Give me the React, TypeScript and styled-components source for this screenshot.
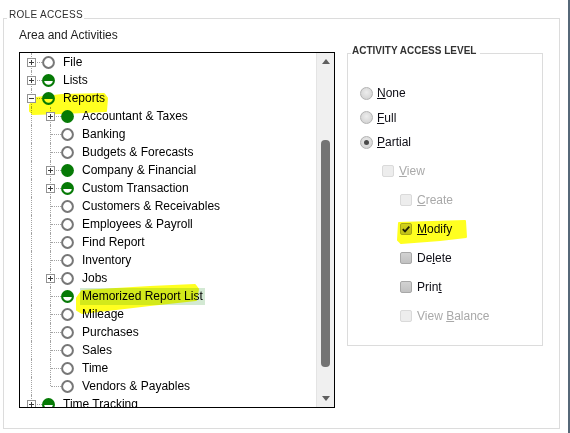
import React from 'react';
import styled, { createGlobalStyle } from 'styled-components';

type Mark = 'none' | 'full' | 'partial';

type TreeNode = {
  label: string;
  level: 0 | 1;
  mark: Mark;
  expander?: 'plus' | 'minus';
  last?: boolean;
  selected?: boolean;
};

const nodes: TreeNode[] = [
  { label: 'File', level: 0, mark: 'none', expander: 'plus' },
  { label: 'Lists', level: 0, mark: 'partial', expander: 'plus' },
  { label: 'Reports', level: 0, mark: 'partial', expander: 'minus' },
  { label: 'Accountant & Taxes', level: 1, mark: 'full', expander: 'plus' },
  { label: 'Banking', level: 1, mark: 'none' },
  { label: 'Budgets & Forecasts', level: 1, mark: 'none' },
  { label: 'Company & Financial', level: 1, mark: 'full', expander: 'plus' },
  { label: 'Custom Transaction', level: 1, mark: 'partial', expander: 'plus' },
  { label: 'Customers & Receivables', level: 1, mark: 'none' },
  { label: 'Employees & Payroll', level: 1, mark: 'none' },
  { label: 'Find Report', level: 1, mark: 'none' },
  { label: 'Inventory', level: 1, mark: 'none' },
  { label: 'Jobs', level: 1, mark: 'none', expander: 'plus' },
  { label: 'Memorized Report List', level: 1, mark: 'partial', selected: true },
  { label: 'Mileage', level: 1, mark: 'none' },
  { label: 'Purchases', level: 1, mark: 'none' },
  { label: 'Sales', level: 1, mark: 'none' },
  { label: 'Time', level: 1, mark: 'none' },
  { label: 'Vendors & Payables', level: 1, mark: 'none', last: true },
  { label: 'Time Tracking', level: 0, mark: 'partial', expander: 'plus' },
];

type Level = { label: string; key: number; checked?: boolean };

const levels: Level[] = [
  { label: 'None', key: 0 },
  { label: 'Full', key: 0 },
  { label: 'Partial', key: 0, checked: true },
];

type Activity = {
  label: string;
  key: number;
  indent: number;
  disabled?: boolean;
  checked?: boolean;
};

const activities: Activity[] = [
  { label: 'View', key: 0, indent: 22, disabled: true },
  { label: 'Create', key: 0, indent: 40, disabled: true },
  { label: 'Modify', key: 0, indent: 40, checked: true },
  { label: 'Delete', key: 2, indent: 40 },
  { label: 'Print', key: 4, indent: 40 },
  { label: 'View Balance', key: 5, indent: 40, disabled: true },
];

const GREEN = '#067a06';

const StateIcon = ({ mark }: { mark: Mark }) => (
  <IconSvg viewBox='0 0 13 13'>
    {mark === 'full' && <circle cx='6.5' cy='6.5' r='6.4' fill={GREEN} />}
    {mark === 'none' && (
      <circle cx='6.5' cy='6.5' r='5.4' fill='#fff' stroke='#777' strokeWidth='2' />
    )}
    {mark === 'partial' && (
      <>
        <circle cx='6.5' cy='6.5' r='5.4' fill='#fff' stroke={GREEN} strokeWidth='2.1' />
        <path d='M1 7 A5.5 5.5 0 0 1 12 7 Z' fill={GREEN} />
      </>
    )}
  </IconSvg>
);

const Expander = ({ open }: { open: boolean }) => (
  <ExpanderSvg viewBox='0 0 9 9'>
    <rect x='0.5' y='0.5' width='8' height='8' fill='#fff' stroke='#939393' />
    <path d='M2 4.5 H7' stroke='#3a3a3a' />
    {!open && <path d='M4.5 2 V7' stroke='#3a3a3a' />}
  </ExpanderSvg>
);

const withKey = (text: string, at: number) => (
  <>
    {text.slice(0, at)}
    <AccessKey>{text[at]}</AccessKey>
    {text.slice(at + 1)}
  </>
);

const App = () => {
  return (
    <Page>
      <GlobalStyle />
      <RoleSet>
        <RoleLegend>ROLE ACCESS</RoleLegend>
        <Body>
          <AreaColumn>
            <AreaLabel>Area and Activities</AreaLabel>
            <TreeBox>
              <TreeList>
                {nodes.map((node) => (
                  <Row key={node.label}>
                    {node.level === 1 && <Guide $line='full' />}
                    <Connector $line={node.last ? 'top' : 'full'}>
                      {node.expander && <Expander open={node.expander === 'minus'} />}
                    </Connector>
                    <StateIcon mark={node.mark} />
                    <NodeLabel $selected={node.selected}>{node.label}</NodeLabel>
                  </Row>
                ))}
              </TreeList>
              <ScrollBar>
                <ScrollArrow $dir='up' />
                <ScrollTrack>
                  <ScrollThumb />
                </ScrollTrack>
                <ScrollArrow $dir='down' />
              </ScrollBar>
            </TreeBox>
          </AreaColumn>
          <AccessSet>
            <AccessLegend>ACTIVITY ACCESS LEVEL</AccessLegend>
            <Options>
              {levels.map((level) => (
                <RadioRow key={level.label}>
                  <RadioDot $checked={level.checked} />
                  <OptionText>{withKey(level.label, level.key)}</OptionText>
                </RadioRow>
              ))}
              <Checks>
                {activities.map((item) => (
                  <CheckRow key={item.label} $indent={item.indent}>
                    <CheckBox $disabled={item.disabled}>
                      {item.checked && (
                        <svg width='10' height='10' viewBox='0 0 10 10'>
                          <path
                            d='M1.8 5.2 L4 7.4 L8.3 2.6'
                            fill='none'
                            stroke='#1e1e1e'
                            strokeWidth='1.8'
                          />
                        </svg>
                      )}
                    </CheckBox>
                    <OptionText $disabled={item.disabled}>
                      {withKey(item.label, item.key)}
                    </OptionText>
                  </CheckRow>
                ))}
              </Checks>
            </Options>
          </AccessSet>
        </Body>
      </RoleSet>
      <Highlighter viewBox='0 0 570 433'>
        <polygon points='30,105 36,98 62,95 104,94 107,98 106,111 62,113 33,114 30,111' />
        <polygon points='77,298 82,291 150,287 195,285 198,289 196,300 150,305 82,313 77,310' />
        <polygon points='399,223 465,221 466,237 440,240 401,243 398,240' />
      </Highlighter>
    </Page>
  );
};

export default App;

const GlobalStyle = createGlobalStyle`
  html, body {
    margin: 0;
    padding: 0;
    background: #fff;
  }

  body {
    font-family: 'Liberation Sans', Arial, sans-serif;
    font-size: 12px;
    color: #000;
  }
`;

const Page = styled.div`
  position: relative;
  box-sizing: border-box;
  width: 570px;
  height: 433px;
  padding-top: 10px;
  border-right: 2px solid #566878;
  background: #fff;
`;

const RoleSet = styled.fieldset`
  box-sizing: border-box;
  width: 557px;
  height: 419px;
  min-width: 0;
  margin: 0 0 0 3px;
  padding: 2px 0 0 15px;
  border: 1px solid #dcdcdc;
`;

const RoleLegend = styled.legend`
  margin-left: -12px;
  padding: 0 1px 6px 2px;
  font-size: 10px;
  line-height: 10px;
  letter-spacing: 0.3px;
  color: #2e2e2e;
`;

const Body = styled.div`
  display: flex;
  align-items: flex-start;
`;

const AreaColumn = styled.div`
  display: flex;
  flex-direction: column;
`;

const AreaLabel = styled.div`
  font-size: 12px;
  line-height: 14px;
  color: #1e1e1e;
  margin-bottom: 10px;
`;

const TreeBox = styled.div`
  box-sizing: border-box;
  display: flex;
  width: 316px;
  height: 356px;
  border: 1px solid #000;
  overflow: hidden;
  background: #fff;
`;

const TreeList = styled.div`
  flex: 1;
  padding-left: 2px;
`;

const Row = styled.div`
  display: flex;
  align-items: center;
  height: 18px;
  white-space: nowrap;
`;

const Guide = styled.span<{ $line: 'full' | 'top' }>`
  position: relative;
  flex: none;
  align-self: stretch;
  width: 19px;

  &::before {
    content: '';
    position: absolute;
    left: 9px;
    top: 0;
    height: ${(p) => (p.$line === 'full' ? '18px' : '9px')};
    border-left: 1px dotted #a3a3a3;
  }
`;

const Connector = styled(Guide)`
  display: flex;
  align-items: flex-start;
  width: 20px;

  &::after {
    content: '';
    position: absolute;
    left: 10px;
    right: 0;
    top: 9px;
    border-top: 1px dotted #a3a3a3;
  }
`;

const ExpanderSvg = styled.svg`
  position: relative;
  z-index: 1;
  width: 9px;
  height: 9px;
  margin: 5px 0 0 5px;
`;

const IconSvg = styled.svg`
  flex: none;
  width: 13px;
  height: 13px;
  margin-right: 6px;
`;

const NodeLabel = styled.span<{ $selected?: boolean }>`
  padding: 0 2px;
  line-height: 17px;
  color: #000;
  background: ${(p) => (p.$selected ? '#d3e9d3' : 'transparent')};
`;

const ScrollBar = styled.div`
  flex: none;
  display: flex;
  flex-direction: column;
  width: 17px;
  background: #f0f0f0;
  border-left: 1px solid #e4e4e4;
`;

const ScrollArrow = styled.div<{ $dir: 'up' | 'down' }>`
  display: flex;
  align-items: center;
  justify-content: center;
  height: 17px;

  &::before {
    content: '';
    border-left: 4px solid transparent;
    border-right: 4px solid transparent;
    ${(p) =>
      p.$dir === 'up' ? 'border-bottom: 5px solid #5f5f5f;' : 'border-top: 5px solid #5f5f5f;'}
  }
`;

const ScrollTrack = styled.div`
  flex: 1;
  display: flex;
  justify-content: center;
`;

const ScrollThumb = styled.div`
  width: 9px;
  height: 227px;
  margin-top: 70px;
  border-radius: 4px;
  background: #747474;
`;

const AccessSet = styled.fieldset`
  box-sizing: border-box;
  width: 196px;
  height: 300px;
  min-width: 0;
  margin: 18px 0 0 12px;
  padding: 0 0 0 12px;
  border: 1px solid #dcdcdc;
`;

const AccessLegend = styled.legend`
  margin-left: -9px;
  padding: 0 4px 4px 1px;
  font-size: 10px;
  font-weight: bold;
  line-height: 10px;
  color: #333;
`;

const Options = styled.div`
  display: flex;
  flex-direction: column;
  padding-top: 21px;
`;

const RadioRow = styled.label`
  display: flex;
  align-items: center;
  gap: 4px;
  height: 24.5px;
`;

const RadioDot = styled.span<{ $checked?: boolean }>`
  box-sizing: border-box;
  display: flex;
  align-items: center;
  justify-content: center;
  flex: none;
  width: 13px;
  height: 13px;
  border-radius: 50%;
  border: 1px solid #b3b3b3;
  background: radial-gradient(circle at 50% 40%, #ededed, #cdcdcd);

  &::after {
    content: '';
    width: 5px;
    height: 5px;
    border-radius: 50%;
    background: ${(p) => (p.$checked ? '#4a4a4a' : 'transparent')};
  }
`;

const Checks = styled.div`
  display: flex;
  flex-direction: column;
  margin-top: 2px;
`;

const CheckRow = styled.label<{ $indent: number }>`
  display: flex;
  align-items: center;
  gap: 5px;
  height: 29px;
  padding-left: ${(p) => p.$indent}px;
`;

const CheckBox = styled.span<{ $disabled?: boolean }>`
  box-sizing: border-box;
  display: flex;
  align-items: center;
  justify-content: center;
  flex: none;
  width: 12px;
  height: 12px;
  border-radius: 2px;
  border: 1px solid ${(p) => (p.$disabled ? '#dadada' : '#a8a8a8')};
  background: ${(p) => (p.$disabled ? '#ededed' : 'linear-gradient(#d2d2d2, #c1c1c1)')};
`;

const OptionText = styled.span<{ $disabled?: boolean }>`
  font-size: 12px;
  line-height: 14px;
  color: ${(p) => (p.$disabled ? '#a9a9a9' : '#0c0c14')};
`;

const AccessKey = styled.u`
  text-decoration: underline;
  text-underline-offset: 1px;
`;

const Highlighter = styled.svg`
  position: absolute;
  left: 0;
  top: 0;
  width: 570px;
  height: 433px;
  pointer-events: none;
  mix-blend-mode: multiply;

  polygon {
    fill: #ffff20;
    stroke: #ffff20;
    stroke-width: 2;
    stroke-linejoin: round;
  }
`;
